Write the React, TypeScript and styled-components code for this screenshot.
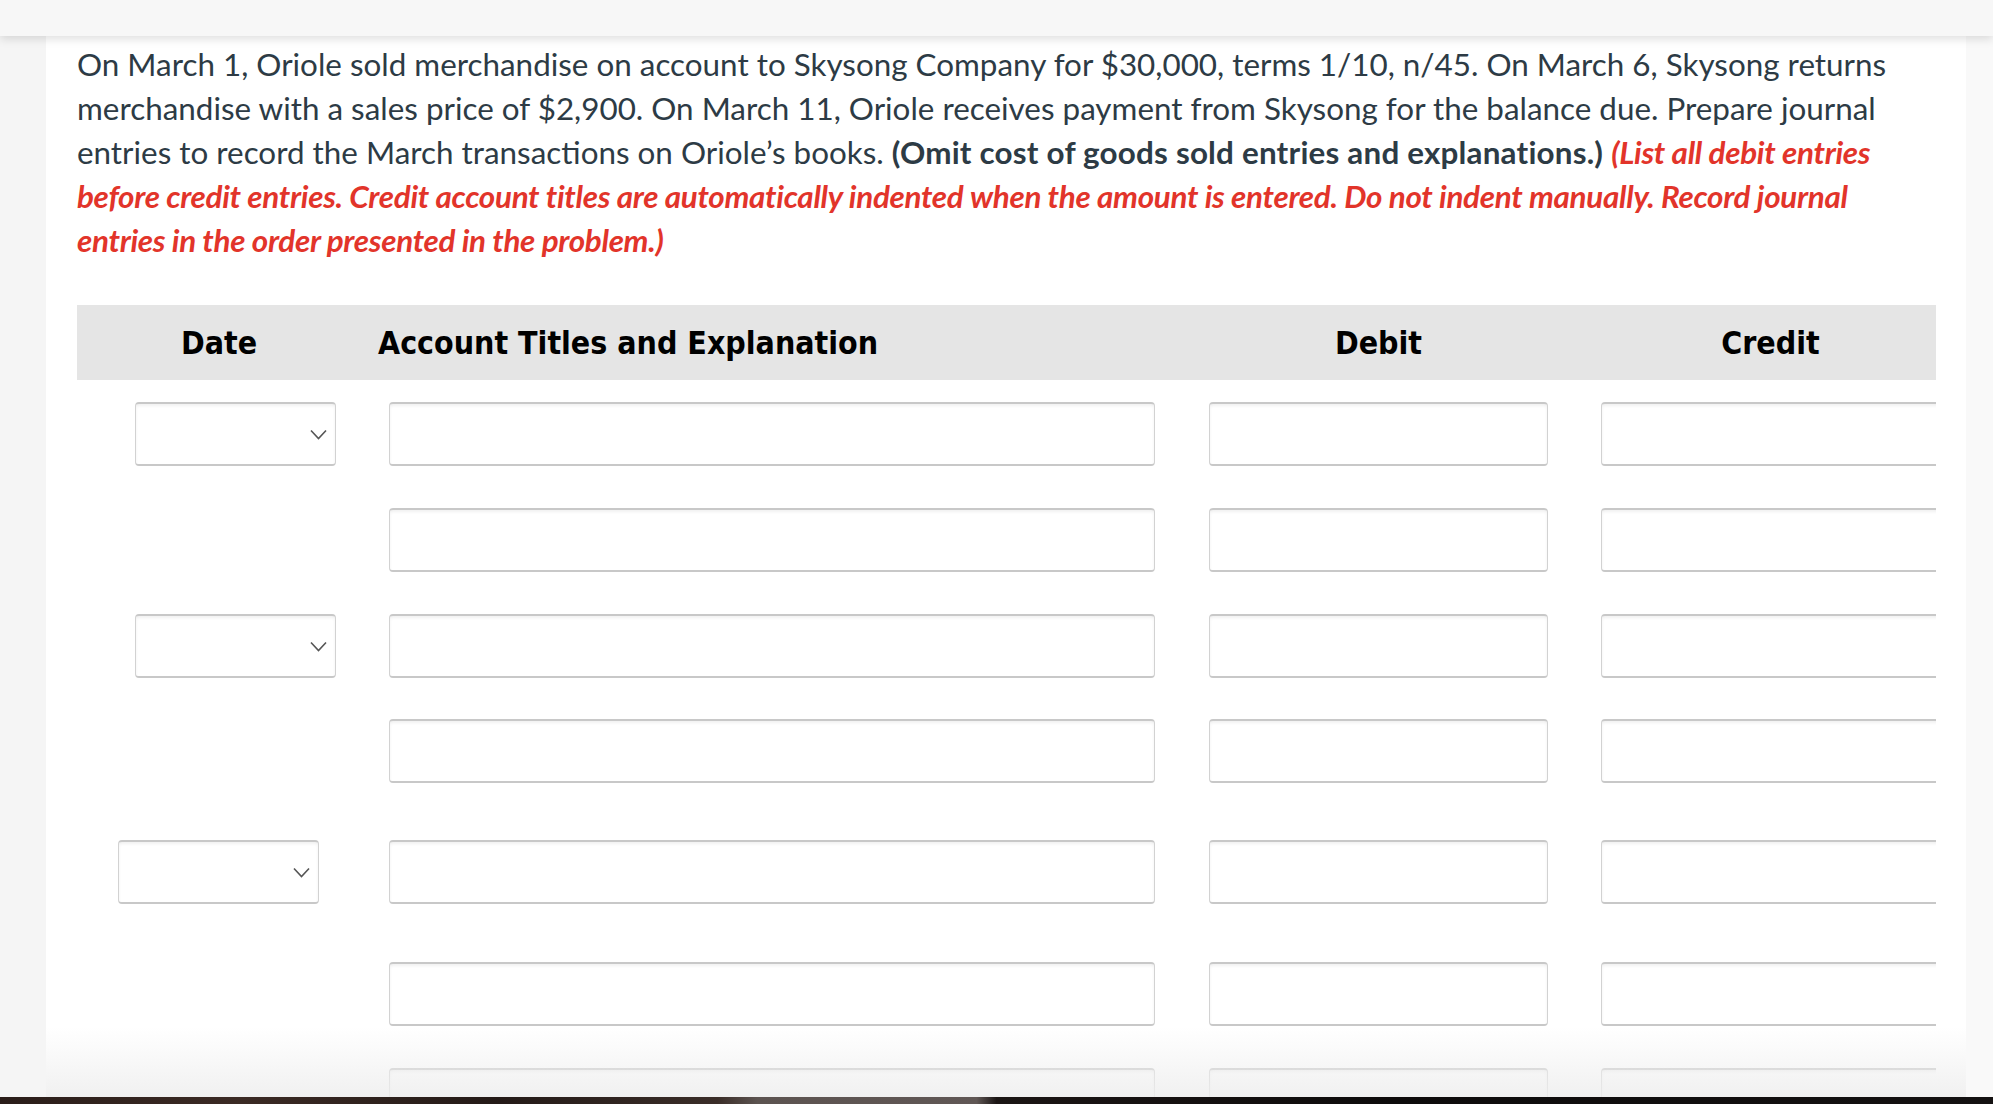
import React from "react";
import styled, { createGlobalStyle } from "styled-components";

const GlobalStyle = createGlobalStyle`
  html, body {
    margin: 0;
    padding: 0;
    background: #f7f7f7;
  }
  * {
    box-sizing: border-box;
  }
`;

const Page = styled.div`
  display: flex;
  flex-direction: column;
  width: 1993px;
  height: 1104px;
  overflow: hidden;
  background: #f7f7f7;
`;

const TopBar = styled.div`
  position: relative;
  z-index: 2;
  flex: 0 0 36px;
  background: #f7f7f7;
  box-shadow: 0 3px 9px rgba(0, 0, 0, 0.13);
`;

const Body = styled.div`
  flex: 1;
  display: flex;
  min-height: 0;
`;

const SideStrip = styled.div<{ $w: string; $bg: string }>`
  flex: 0 0 ${({ $w }) => $w};
  background: ${({ $bg }) => $bg};
`;

const Panel = styled.div`
  position: relative;
  flex: 0 0 1920px;
  background: #ffffff;
  padding: 6px 30px 0 31px;
  overflow: hidden;
`;

const Fade = styled.div`
  position: absolute;
  left: 0;
  right: 0;
  bottom: 0;
  height: 70px;
  pointer-events: none;
  background: linear-gradient(to bottom, rgba(242, 242, 242, 0), rgba(238, 238, 238, 0.85));
`;

const Question = styled.p`
  margin: 0;
  font-family: Lato, "Liberation Sans", sans-serif;
  font-size: 31.4px;
  line-height: 44px;
  color: #2d3b45;
  width: 1859px;
`;

const Strong = styled.strong`
  font-weight: 700;
  letter-spacing: 0.2px;
`;

const Note = styled.em`
  font-weight: 700;
  font-style: italic;
  color: #e2342a;
  letter-spacing: -0.3px;
`;

const Table = styled.div`
  margin-top: 43px;
  width: 1859px;
  overflow: hidden;
`;

const columns = "312px 820px 392px 1fr";

const HeaderRow = styled.div`
  display: grid;
  grid-template-columns: ${columns};
  align-items: center;
  height: 75px;
  background: #e5e5e5;
`;

const HeadCell = styled.div<{ $align?: string; $shift?: string; $w?: string }>`
  font-family: "DejaVu Sans Condensed", "DejaVu Sans", sans-serif;
  font-stretch: condensed;
  font-weight: 700;
  font-size: 31.8px;
  color: #000;
  width: ${({ $w }) => $w || "auto"};
  text-align: ${({ $align }) => $align || "center"};
  padding-right: ${({ $shift }) => $shift || "0"};
  margin-left: ${({ $align }) => ($align === "left" ? "-11px" : "0")};
`;

const Row = styled.div<{ $space: number }>`
  display: grid;
  grid-template-columns: ${columns};
  height: 64px;
  margin-top: ${({ $space }) => $space}px;
`;

const DateCell = styled.div<{ $inset: number }>`
  padding-left: ${({ $inset }) => $inset}px;
`;

const fieldBox = `
  display: block;
  height: 64px;
  background: #fff;
  border: 1px solid #d2d2d2;
  border-top: 2px solid #c8c8c8;
  border-bottom: 2px solid #c8c8c8;
  border-radius: 4px;
  box-shadow: inset 0 2px 3px rgba(0, 0, 0, 0.06);
  outline: none;
  font-family: Lato, "Liberation Sans", sans-serif;
  font-size: 22px;
  padding: 0 12px;
`;

const Select = styled.div`
  ${fieldBox}
  position: relative;
  width: 201px;
`;

const Chevron = styled.svg`
  position: absolute;
  right: 8px;
  top: 50%;
  width: 17px;
  height: 11px;
  margin-top: -5px;
`;

const Field = styled.input<{ $w: number }>`
  ${fieldBox}
  width: ${({ $w }) => $w}px;
`;

const BottomStrip = styled.div`
  flex: 0 0 7px;
  background: linear-gradient(
    to right,
    #2a1d19 0%,
    #3b2a24 12%,
    #241a17 25%,
    #3a2d28 36%,
    #5c5350 38%,
    #605755 49%,
    #1b1514 50%,
    #0d0b0b 70%,
    #141111 100%
  );
`;

type RowSpec = { space: number; date?: number };

const rows: RowSpec[] = [
  { space: 22, date: 58 },
  { space: 42 },
  { space: 42, date: 58 },
  { space: 41 },
  { space: 57, date: 41 },
  { space: 58 },
  { space: 42 },
];

const DateSelect = () => (
  <Select>
    <Chevron viewBox="0 0 17 11">
      <polyline points="1,1.5 8.5,9.5 16,1.5" fill="none" stroke="#555" strokeWidth="1.6" />
    </Chevron>
  </Select>
);

export default function App() {
  return (
    <Page>
      <GlobalStyle />
      <TopBar />
      <Body>
        <SideStrip $w="46px" $bg="#f5f5f5" />
        <Panel>
          <Question>
            On March 1, Oriole sold merchandise on account to Skysong Company for $30,000, terms 1/10, n/45. On
            March 6, Skysong returns merchandise with a sales price of $2,900. On March 11, Oriole receives payment
            from Skysong for the balance due. Prepare journal entries to record the March transactions on Oriole’s
            books. <Strong>(Omit cost of goods sold entries and explanations.)</Strong>{" "}
            <Note>
              (List all debit entries before credit entries. Credit account titles are automatically indented when
              the amount is entered. Do not indent manually. Record journal entries in the order presented in the
              problem.)
            </Note>
          </Question>
          <Table>
            <HeaderRow>
              <HeadCell $shift="28px">Date</HeadCell>
              <HeadCell $align="left">Account Titles and Explanation</HeadCell>
              <HeadCell $w="339px">Debit</HeadCell>
              <HeadCell $w="339px">Credit</HeadCell>
            </HeaderRow>
            {rows.map((r, i) => (
              <Row key={i} $space={r.space}>
                <DateCell $inset={r.date ?? 0}>{r.date !== undefined && <DateSelect />}</DateCell>
                <div>
                  <Field $w={766} />
                </div>
                <div>
                  <Field $w={339} />
                </div>
                <div>
                  <Field $w={339} />
                </div>
              </Row>
            ))}
          </Table>
          <Fade />
        </Panel>
        <SideStrip $w="27px" $bg="#f9f9f9" />
      </Body>
      <BottomStrip />
    </Page>
  );
}
